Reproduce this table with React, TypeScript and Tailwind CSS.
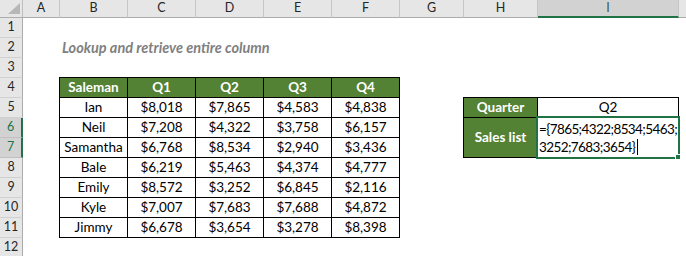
const columns = [
  { label: "A", w: "w-[37px]" },
  { label: "B", w: "w-[68px]" },
  { label: "C", w: "w-[68px]" },
  { label: "D", w: "w-[68px]" },
  { label: "E", w: "w-[68px]" },
  { label: "F", w: "w-[68px]" },
  { label: "G", w: "w-[64px]" },
  { label: "H", w: "w-[74px]" },
]

const sales = [
  ["Ian", "$8,018", "$7,865", "$4,583", "$4,838"],
  ["Neil", "$7,208", "$4,322", "$3,758", "$6,157"],
  ["Samantha", "$6,768", "$8,534", "$2,940", "$3,436"],
  ["Bale", "$6,219", "$5,463", "$4,374", "$4,777"],
  ["Emily", "$8,572", "$3,252", "$6,845", "$2,116"],
  ["Kyle", "$7,007", "$7,683", "$7,688", "$4,872"],
  ["Jimmy", "$6,678", "$3,654", "$3,278", "$8,398"],
]

const rowNumbers = [1, 2, 3, 4, 5, 6, 7, 8, 9, 10, 11, 12]

function HeaderBar() {
  return (
    <div className="flex h-[18px] shrink-0 text-[12.5px] text-[#262626]">
      {/* corner with select-all triangle */}
      <div className="relative w-[23px] border-r border-b border-r-[#bfbfbf] border-b-[#ababab] bg-[#e6e6e6]">
        <svg className="absolute inset-0" width="23" height="18" aria-hidden>
          <polygon points="20,3 20,14 8,14" fill="#b7b7b7" />
        </svg>
      </div>
      {columns.map((c) => (
        <div
          key={c.label}
          className={`${c.w} flex items-center justify-center border-r border-b border-r-[#c6c6c6] border-b-[#ababab] bg-[#e6e6e6]`}
        >
          {c.label}
        </div>
      ))}
      <div className="flex w-[141px] items-center justify-center border-r border-b-2 border-r-[#c6c6c6] border-b-[#217346] bg-[#d2d2d2] text-[#3d5a48]">
        I
      </div>
      <div className="flex-1 border-b border-b-[#ababab] bg-[#e6e6e6]" />
    </div>
  )
}

function RowHeaders() {
  return (
    <div className="flex w-[23px] shrink-0 flex-col text-[12.5px]">
      {rowNumbers.map((n) => {
        const selected = n === 6 || n === 7
        return (
          <div
            key={n}
            className={
              selected
                ? "flex h-[20px] shrink-0 items-center justify-center border-b border-r-2 border-b-[#c0c0c0] border-r-[#217346] bg-[#d2d2d2] text-[#217346]"
                : "flex h-[20px] shrink-0 items-center justify-center border-b border-r border-b-[#d0d0d0] border-r-[#ababab] bg-[#e6e6e6] text-[#262626]"
            }
          >
            {n}
          </div>
        )
      })}
    </div>
  )
}

function SalesTable() {
  return (
    <div className="col-start-2 col-span-5 row-start-4 row-span-8 -ml-px -mt-px grid grid-cols-5 grid-rows-8 border-l border-t border-black text-[13.5px]">
      {["Saleman", "Q1", "Q2", "Q3", "Q4"].map((h) => (
        <div
          key={h}
          className="flex items-center justify-center border-r border-b border-black bg-[#548235] font-bold text-white"
        >
          {h}
        </div>
      ))}
      {sales.map((row) =>
        row.map((v, i) => (
          <div
            key={row[0] + i}
            className="flex items-center justify-center border-r border-b border-black text-black"
          >
            {v}
          </div>
        ))
      )}
    </div>
  )
}

function LookupTable() {
  return (
    <div className="col-start-8 col-span-2 row-start-5 row-span-3 -ml-px -mt-px grid grid-cols-[74px_141px] grid-rows-[20px_40px] border-l border-t border-black text-[13.5px]">
      <div className="flex items-center justify-center border-r border-b border-black bg-[#548235] font-bold text-white">
        Quarter
      </div>
      <div className="flex items-center justify-center border-r border-b border-black text-black">
        Q2
      </div>
      <div className="flex items-center justify-center border-r border-b border-black bg-[#548235] font-bold text-white">
        Sales list
      </div>
      <div className="relative flex flex-col justify-end border-r border-b border-black pb-[1px] pl-[1px] leading-[18px] text-black">
        <div className="whitespace-nowrap tracking-[-0.6px]">={"{"}7865;4322;8534;5463;</div>
        <div className="flex items-center whitespace-nowrap tracking-[-0.6px]">
          3252;7683;3654{"}"}
          <span className="ml-[2px] inline-block h-[16px] w-px bg-black" />
        </div>
        {/* active selection */}
        <div className="pointer-events-none absolute -top-[2px] -left-[2px] -right-[2px] -bottom-[2px] border-2 border-[#217346]" />
        <div className="absolute -right-[3px] -bottom-[3px] h-[6px] w-[6px] border border-white bg-[#217346]" />
      </div>
    </div>
  )
}

export default function App() {
  return (
    <div className="flex h-[256px] w-[686px] flex-col overflow-hidden bg-white font-[Lato,sans-serif]">
      <HeaderBar />
      <div className="flex flex-1">
        <RowHeaders />
        <div className="grid flex-1 grid-cols-[37px_68px_68px_68px_68px_68px_64px_74px_141px_1fr] grid-rows-[repeat(12,20px)]">
          <div className="col-start-2 row-start-2 flex items-center whitespace-nowrap pl-[2px] text-[14.5px] font-bold italic text-[#7f7f7f]">
            Lookup and retrieve entire column
          </div>
          <SalesTable />
          <LookupTable />
        </div>
      </div>
    </div>
  )
}
